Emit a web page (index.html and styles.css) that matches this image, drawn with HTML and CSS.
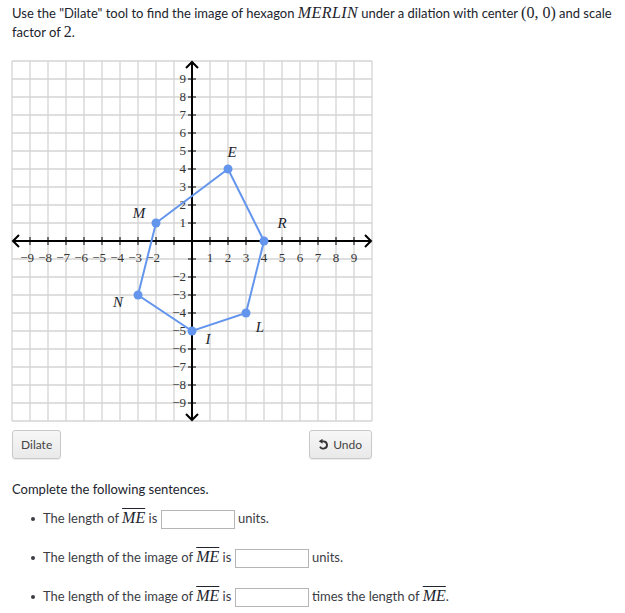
FILE: index.html
```html
<!DOCTYPE html>
<html>
<head>
<meta charset="utf-8">
<link rel="stylesheet" href="styles.css">
</head>
<body>
<div class="page">
  <p class="prompt">Use the "Dilate" tool to find the image of hexagon <span class="mi">MERLIN</span> under a dilation with center <span class="mn">(0, 0)</span> and scale factor of <span class="mn">2</span>.</p>

  <div class="graph">
    <svg width="360" height="360" viewBox="12 61 360 360" class="plot">
      <g class="grid">
        <line x1="12" y1="61" x2="12" y2="421"/><line x1="30" y1="61" x2="30" y2="421"/><line x1="48" y1="61" x2="48" y2="421"/><line x1="66" y1="61" x2="66" y2="421"/><line x1="84" y1="61" x2="84" y2="421"/><line x1="102" y1="61" x2="102" y2="421"/><line x1="120" y1="61" x2="120" y2="421"/><line x1="138" y1="61" x2="138" y2="421"/><line x1="156" y1="61" x2="156" y2="421"/><line x1="174" y1="61" x2="174" y2="421"/><line x1="210" y1="61" x2="210" y2="421"/><line x1="228" y1="61" x2="228" y2="421"/><line x1="246" y1="61" x2="246" y2="421"/><line x1="264" y1="61" x2="264" y2="421"/><line x1="282" y1="61" x2="282" y2="421"/><line x1="300" y1="61" x2="300" y2="421"/><line x1="318" y1="61" x2="318" y2="421"/><line x1="336" y1="61" x2="336" y2="421"/><line x1="354" y1="61" x2="354" y2="421"/><line x1="372" y1="61" x2="372" y2="421"/>
        <line x1="12" y1="61" x2="372" y2="61"/><line x1="12" y1="79" x2="372" y2="79"/><line x1="12" y1="97" x2="372" y2="97"/><line x1="12" y1="115" x2="372" y2="115"/><line x1="12" y1="133" x2="372" y2="133"/><line x1="12" y1="151" x2="372" y2="151"/><line x1="12" y1="169" x2="372" y2="169"/><line x1="12" y1="187" x2="372" y2="187"/><line x1="12" y1="205" x2="372" y2="205"/><line x1="12" y1="223" x2="372" y2="223"/><line x1="12" y1="259" x2="372" y2="259"/><line x1="12" y1="277" x2="372" y2="277"/><line x1="12" y1="295" x2="372" y2="295"/><line x1="12" y1="313" x2="372" y2="313"/><line x1="12" y1="331" x2="372" y2="331"/><line x1="12" y1="349" x2="372" y2="349"/><line x1="12" y1="367" x2="372" y2="367"/><line x1="12" y1="385" x2="372" y2="385"/><line x1="12" y1="403" x2="372" y2="403"/><line x1="12" y1="421" x2="372" y2="421"/>
      </g>
      <g class="axis">
        <line x1="13" y1="241" x2="371" y2="241"/>
        <line x1="192" y1="62" x2="192" y2="420"/>
        <polyline points="19,235 13,241 19,247"/>
        <polyline points="365,235 371,241 365,247"/>
        <polyline points="186,68 192,62 198,68"/>
        <polyline points="186,414 192,420 198,414"/>
        <g class="ticks">
          <line x1="30" y1="237" x2="30" y2="245"/><line x1="48" y1="237" x2="48" y2="245"/><line x1="66" y1="237" x2="66" y2="245"/><line x1="84" y1="237" x2="84" y2="245"/><line x1="102" y1="237" x2="102" y2="245"/><line x1="120" y1="237" x2="120" y2="245"/><line x1="138" y1="237" x2="138" y2="245"/><line x1="156" y1="237" x2="156" y2="245"/><line x1="174" y1="237" x2="174" y2="245"/><line x1="210" y1="237" x2="210" y2="245"/><line x1="228" y1="237" x2="228" y2="245"/><line x1="246" y1="237" x2="246" y2="245"/><line x1="264" y1="237" x2="264" y2="245"/><line x1="282" y1="237" x2="282" y2="245"/><line x1="300" y1="237" x2="300" y2="245"/><line x1="318" y1="237" x2="318" y2="245"/><line x1="336" y1="237" x2="336" y2="245"/><line x1="354" y1="237" x2="354" y2="245"/>
          <line x1="188" y1="79" x2="196" y2="79"/><line x1="188" y1="97" x2="196" y2="97"/><line x1="188" y1="115" x2="196" y2="115"/><line x1="188" y1="133" x2="196" y2="133"/><line x1="188" y1="151" x2="196" y2="151"/><line x1="188" y1="169" x2="196" y2="169"/><line x1="188" y1="187" x2="196" y2="187"/><line x1="188" y1="205" x2="196" y2="205"/><line x1="188" y1="223" x2="196" y2="223"/><line x1="188" y1="259" x2="196" y2="259"/><line x1="188" y1="277" x2="196" y2="277"/><line x1="188" y1="295" x2="196" y2="295"/><line x1="188" y1="313" x2="196" y2="313"/><line x1="188" y1="331" x2="196" y2="331"/><line x1="188" y1="349" x2="196" y2="349"/><line x1="188" y1="367" x2="196" y2="367"/><line x1="188" y1="385" x2="196" y2="385"/><line x1="188" y1="403" x2="196" y2="403"/>
        </g>
      </g>
      <g class="nums">
        <text x="34" y="262" class="end">−9</text><text x="52" y="262" class="end">−8</text><text x="70" y="262" class="end">−7</text><text x="88" y="262" class="end">−6</text><text x="106" y="262" class="end">−5</text><text x="124" y="262" class="end">−4</text><text x="142" y="262" class="end">−3</text><text x="160" y="262" class="end">−2</text>
        <text x="210" y="262">1</text><text x="228" y="262">2</text><text x="246" y="262">3</text><text x="264" y="262">4</text><text x="282" y="262">5</text><text x="300" y="262">6</text><text x="318" y="262">7</text><text x="336" y="262">8</text><text x="354" y="262">9</text>
        <text x="186" y="83" class="end">9</text><text x="186" y="101" class="end">8</text><text x="186" y="119" class="end">7</text><text x="186" y="137" class="end">6</text><text x="186" y="155" class="end">5</text><text x="186" y="173" class="end">4</text><text x="186" y="191" class="end">3</text><text x="186" y="209" class="end">2</text><text x="186" y="227" class="end">1</text>
        <text x="186" y="281" class="end">−2</text><text x="186" y="299" class="end">−3</text><text x="186" y="317" class="end">−4</text><text x="186" y="335" class="end">−5</text><text x="186" y="353" class="end">−6</text><text x="186" y="371" class="end">−7</text><text x="186" y="389" class="end">−8</text><text x="186" y="407" class="end">−9</text>
      </g>
      <polygon class="shape" points="156,223 228,169 264,241 246,313 192,331 138,295"/>
      <g class="pts">
        <circle cx="156" cy="223" r="4.5"/><circle cx="228" cy="169" r="4.5"/><circle cx="264" cy="241" r="4.5"/><circle cx="246" cy="313" r="4.5"/><circle cx="192" cy="331" r="4.5"/><circle cx="138" cy="295" r="4.5"/>
      </g>
      <g class="plabels">
        <text x="139" y="218">M</text>
        <text x="232" y="157">E</text>
        <text x="282" y="228">R</text>
        <text x="260" y="332">L</text>
        <text x="208" y="344">I</text>
        <text x="118" y="307">N</text>
      </g>
    </svg>
  </div>

  <div class="tools">
    <button class="btn">Dilate</button>
    <button class="btn undo"><svg class="undo-icon" width="11" height="11" viewBox="0 0 12 12"><path d="M4.5 2.5 H6 A4 4 0 1 1 2.2 8.2" fill="none" stroke="#333" stroke-width="2"/><polygon points="0.8,2.5 5,-0.3 5,5.3" fill="#333"/></svg>Undo</button>
  </div>

  <p class="lead">Complete the following sentences.</p>
  <ul class="items">
    <li>The length of <span class="seg">ME</span> is <span class="box"></span> units.</li>
    <li>The length of the image of <span class="seg">ME</span> is <span class="box"></span> units.</li>
    <li>The length of the image of <span class="seg">ME</span> is <span class="box"></span> times the length of <span class="seg">ME</span>.</li>
  </ul>
</div>
</body>
</html>
```

FILE: styles.css
```css
html, body {
  margin: 0;
  padding: 0;
  background: #fff;
}

.page {
  padding: 4px 4px 0 12px;
  font-family: Lato, "Open Sans", sans-serif;
  font-size: 13px;
  color: #21242c;
}

.prompt {
  margin: 0;
  line-height: 19px;
}

.mi {
  font-family: "Liberation Serif", serif;
  font-style: italic;
  font-size: 16px;
  line-height: 1;
  letter-spacing: 0.4px;
}

.mn {
  font-family: "Liberation Serif", serif;
  font-size: 16px;
  line-height: 1;
}

.graph {
  margin-top: 19px;
  width: 360px;
  height: 360px;
}

.plot {
  display: block;
  overflow: visible;
}

.grid line {
  stroke: #d4d4d4;
  stroke-width: 1.3;
}

.axis line, .axis polyline {
  stroke: #000;
  stroke-width: 2;
  fill: none;
}

.axis .ticks line {
  stroke-width: 1;
}

.nums text {
  font-family: "Liberation Serif", serif;
  font-size: 13px;
  fill: #333;
  text-anchor: middle;
}

.nums text.end {
  text-anchor: end;
}

.shape {
  fill: none;
  stroke: #6495ed;
  stroke-width: 2;
}

.pts circle {
  fill: #6495ed;
}

.plabels text {
  font-family: "Liberation Serif", serif;
  font-style: italic;
  font-size: 15px;
  fill: #21242c;
  text-anchor: middle;
}

.tools {
  margin-top: 9px;
  width: 360px;
  display: flex;
  justify-content: space-between;
}

.btn {
  height: 29px;
  padding: 0 8px;
  border: 1px solid #c9c9c9;
  border-radius: 3px;
  background: linear-gradient(#f7f7f7, #e9e9e9);
  box-shadow: 0 1px 1px rgba(0,0,0,0.08);
  font-family: Lato, "Open Sans", sans-serif;
  font-size: 12px;
  color: #444;
  display: flex;
  align-items: center;
}

.undo {
  padding: 0 9px 0 8px;
}

.undo-icon {
  margin-right: 4px;
}

.lead {
  margin: 20px 0 0 0;
  line-height: 20px;
}

.items {
  margin: 0;
  padding: 0 0 0 31px;
  list-style: none;
}

.items li {
  height: 39px;
  line-height: 39px;
  position: relative;
  color: #3b3d45;
}

.items li::before {
  content: "";
  position: absolute;
  left: -12px;
  top: 18px;
  width: 4px;
  height: 4px;
  border-radius: 50%;
  background: #3b3d45;
}

.seg {
  font-family: "Liberation Serif", serif;
  font-style: italic;
  font-size: 16px;
  line-height: 1;
  text-decoration: overline;
  text-decoration-thickness: 1px;
  color: #21242c;
}

.box {
  display: inline-block;
  vertical-align: middle;
  width: 72px;
  height: 17px;
  border: 1px solid #b5b5b5;
}
```
